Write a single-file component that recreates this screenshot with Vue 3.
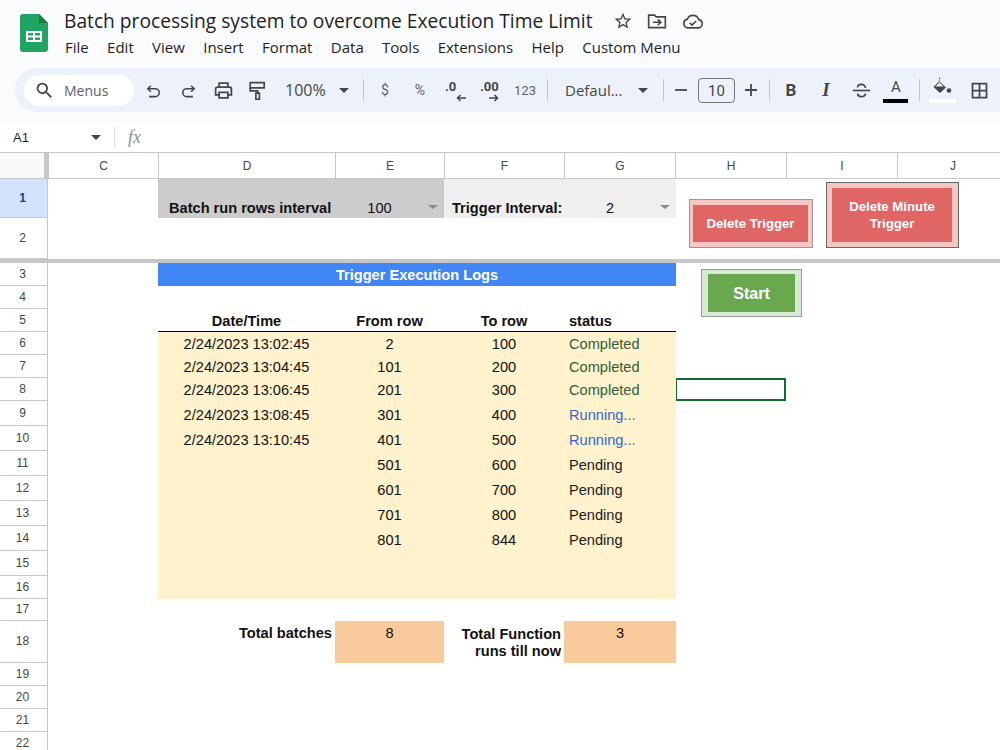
<template>
  <div class="app">
    <header class="topbar">
      <svg class="logo" viewBox="0 0 28 38">
        <path d="M3 0h16l9 9v26a3 3 0 0 1-3 3H3a3 3 0 0 1-3-3V3a3 3 0 0 1 3-3z" fill="#1fa463" />
        <path d="M19 0l9 9h-9z" fill="#188038" />
        <path d="M6 17h16v11H6z M8 19v2.500h5V19z M15 19v2.500h5V19z M8 23.500V26h5v-2.500z M15 23.500V26h5v-2.500z" fill="#fff" fill-rule="evenodd" />
      </svg>
      <div class="titles">
        <div class="title-row">
          <span class="doc-title">Batch processing system to overcome Execution Time Limit</span>
          <svg class="title-icon star" viewBox="0 0 24 24"><path d="M22 9.240l-7.190-.62L12 2 9.190 8.630 2 9.240l5.460 4.730L5.820 21 12 17.270 18.180 21l-1.630-7.030L22 9.240zM12 15.400l-3.760 2.270 1-4.280-3.320-2.880 4.380-.38L12 6.100l1.710 4.040 4.380.38-3.320 2.880 1 4.280L12 15.400z" fill="#444746" /></svg>
          <svg class="title-icon folder" viewBox="0 0 24 24" fill="none" stroke="#444746" stroke-width="2"><path d="M2 5h7l2 2h11v13H2z" /><path d="M7 13.500h9M13 10l3.500 3.500L13 17" /></svg>
          <svg class="title-icon cloud" viewBox="0 0 24 24" fill="none" stroke="#444746" stroke-width="1.800"><path d="M6.500 19.500a4.800 4.800 0 0 1-.6-9.500 6.500 6.500 0 0 1 12.300.5 4.600 4.600 0 0 1 .3 9z" /><path d="M8.500 14l2.500 2.500 4.500-4.500" /></svg>
        </div>
        <nav class="menu">
          <span v-for="item in menus" :key="item">{{ item }}</span>
        </nav>
      </div>
    </header>

    <div class="toolbar">
      <div class="search">
        <svg class="icon" viewBox="0 0 24 24"><path d="M15.500 14h-.79l-.28-.27A6.470 6.470 0 0 0 16 9.500 6.500 6.500 0 1 0 9.500 16c1.610 0 3.090-.59 4.230-1.570l.27.28v.79l5 4.990L20.490 19l-4.990-5zm-6 0C7.010 14 5 11.990 5 9.500S7.010 5 9.500 5 14 7.010 14 9.500 11.990 14 9.500 14z" fill="#444746" /></svg>
        <span>Menus</span>
      </div>

      <div class="group first">
        <span class="tool"><svg class="icon" viewBox="0 0 24 24" fill="none" stroke="#444746" stroke-width="1.800"><path d="M9 6.500L5.500 10 9 13.500" /><path d="M5.500 10H14a4.500 4.500 0 0 1 0 9H7" /></svg></span>
        <span class="tool"><svg class="icon" viewBox="0 0 24 24" fill="none" stroke="#444746" stroke-width="1.800"><path d="M15 6.500l3.500 3.500-3.500 3.500" /><path d="M18.500 10H10a4.500 4.500 0 0 0 0 9h7" /></svg></span>
        <span class="tool"><svg class="icon" viewBox="0 0 24 24" fill="none" stroke="#444746" stroke-width="2"><path d="M7 8V3.500h10V8" /><path d="M7 17H3V10a2 2 0 0 1 2-2h14a2 2 0 0 1 2 2v7h-4" /><path d="M7 14h10v6.500H7z" /></svg></span>
        <span class="tool"><svg class="icon" viewBox="0 0 24 24" fill="none" stroke="#444746" stroke-width="1.900"><path d="M2.500 3h16v6h-16z" /><path d="M2.500 9v3.500H11V15" /><path d="M9 15h4v7H9z" /></svg></span>
      </div>

      <div class="select zoom-select">
        <span>100%</span>
        <i class="caret"></i>
      </div>
      <i class="divider zoom-divider"></i>

      <div class="group narrow">
        <span class="tool small-text">$</span>
        <span class="tool small-text">%</span>
        <span class="tool decimal">
          <b>.0</b>
          <svg class="arrow left" viewBox="0 0 10 8" fill="none" stroke="#444746" stroke-width="1.500"><path d="M10 4H1.500M4.500 1L1.500 4l3 3" /></svg>
        </span>
        <span class="tool decimal">
          <b>.00</b>
          <svg class="arrow right" viewBox="0 0 10 8" fill="none" stroke="#444746" stroke-width="1.500"><path d="M0 4h8.500M5.500 1l3 3-3 3" /></svg>
        </span>
        <span class="tool number">123</span>
      </div>
      <i class="divider after-number"></i>

      <div class="select font-select">
        <span>Defaul...</span>
        <i class="caret"></i>
      </div>
      <i class="divider font-divider"></i>

      <div class="size">
        <svg class="step" viewBox="0 0 24 24" fill="none" stroke="#444746" stroke-width="1.800"><path d="M6 12h12" /></svg>
        <span class="size-box">10</span>
        <svg class="step" viewBox="0 0 24 24" fill="none" stroke="#444746" stroke-width="1.800"><path d="M6 12h12M12 6v12" /></svg>
      </div>
      <i class="divider size-divider"></i>

      <div class="group narrow">
        <span class="tool bold">B</span>
        <span class="tool italic">I</span>
        <span class="tool"><svg class="icon" viewBox="0 0 24 24" fill="none" stroke="#444746" stroke-width="1.900"><path d="M2 12h20" /><path d="M16.500 9c0-2.500-2-4-4.500-4S7.500 6.500 7.500 8.500" /><path d="M7.500 15.500c.3 2.500 2 3.500 4.500 3.500s4.300-1 4.500-3.500" /></svg></span>
        <span class="tool color-tool">A<i class="swatch black"></i></span>
      </div>
      <i class="divider color-divider"></i>

      <span class="tool fill-tool">
        <svg class="fill-icon" viewBox="0 0 24 20"><path d="M9 1l1.500 1.500L8.500 4.500l7.500 7-6 5.500-6.500-6 6-6z M9.500 6.200l-4 4.300h8z" fill="#444746" fill-rule="evenodd" /><circle cx="19" cy="14.500" r="2.300" fill="#444746" /></svg>
        <i class="swatch white"></i>
      </span>
      <span class="tool borders"><svg class="icon" viewBox="0 0 24 24" fill="none" stroke="#444746" stroke-width="2"><path d="M4 4h16v16H4zM12 4v16M4 12h16" /></svg></span>
    </div>

    <div class="formula-bar">
      <span class="name-box">A1</span>
      <i class="caret"></i>
      <i class="formula-divider"></i>
      <span class="fx">fx</span>
    </div>

    <div class="sheet">
      <div class="corner"></div>
      <div v-for="col in columns" :key="col" class="col-head">{{ col }}</div>
      <div
        v-for="row in rows"
        :key="row"
        class="row-head"
        :class="{ active: row === 1 }"
        :style="{ gridRow: gridRowOf(row) }"
      >{{ row }}</div>
      <div class="freeze-line"></div>

      <div
        v-for="cell in cells"
        :key="cell.key"
        class="cell"
        :class="cell.cls"
        :style="{ gridRow: cell.gridRow, gridColumn: cell.gridColumn }"
      >
        <span class="cell-text">{{ cell.text }}</span>
        <i v-if="cell.dropdown" class="cell-caret"></i>
      </div>

      <div class="selection"></div>

      <button class="sheet-button red delete-trigger"><span>Delete Trigger</span></button>
      <button class="sheet-button red delete-minute"><span>Delete Minute<br />Trigger</span></button>
      <button class="sheet-button green start"><span>Start</span></button>
    </div>
  </div>
</template>

<script setup>
const menus = ['File', 'Edit', 'View', 'Insert', 'Format', 'Data', 'Tools', 'Extensions', 'Help', 'Custom Menu']
const columns = ['C', 'D', 'E', 'F', 'G', 'H', 'I', 'J']
const rows = Array.from({ length: 22 }, (_, i) => i + 1)

// row 2 and 3 have the freeze line between them
const gridRowOf = (row) => (row <= 2 ? row + 1 : row + 2)
const colIndex = { D: 3, E: 4, F: 5, G: 6 }

const logs = [
  ['2/24/2023 13:02:45', '2', '100', 'Completed'],
  ['2/24/2023 13:04:45', '101', '200', 'Completed'],
  ['2/24/2023 13:06:45', '201', '300', 'Completed'],
  ['2/24/2023 13:08:45', '301', '400', 'Running...'],
  ['2/24/2023 13:10:45', '401', '500', 'Running...'],
  ['', '501', '600', 'Pending'],
  ['', '601', '700', 'Pending'],
  ['', '701', '800', 'Pending'],
  ['', '801', '844', 'Pending'],
  ['', '', '', ''],
  ['', '', '', '']
]

const cell = (col, row, text, cls, extra = {}) => ({
  key: col + row,
  text,
  cls,
  gridRow: gridRowOf(row),
  gridColumn: colIndex[col],
  ...extra
})

const statusClass = { Completed: 'done', 'Running...': 'running', Pending: 'pending' }

// rows from 9 on are taller and sit a pixel lower
const tallRow = (i) => (i >= 3 ? 'tall' : '')

const cells = [
  cell('D', 1, 'Batch run rows interval', 'dark label'),
  cell('E', 1, '100', 'dark value', { dropdown: true }),
  cell('F', 1, 'Trigger Interval:', 'light label'),
  cell('G', 1, '2', 'light value edge', { dropdown: true }),
  cell('D', 3, 'Trigger Execution Logs', 'banner edge', { gridColumn: '3 / 7' }),
  cell('D', 5, 'Date/Time', 'head center'),
  cell('E', 5, 'From row', 'head center'),
  cell('F', 5, 'To row', 'head center'),
  cell('G', 5, 'status', 'head left edge'),
  ...logs.flatMap((log, i) => [
    cell('D', i + 6, log[0], ['log center', tallRow(i)]),
    cell('E', i + 6, log[1], ['log center', tallRow(i)]),
    cell('F', i + 6, log[2], ['log center', tallRow(i)]),
    cell('G', i + 6, log[3], ['log left edge', tallRow(i), statusClass[log[3]]])
  ]),
  cell('D', 18, 'Total batches', 'total-label'),
  cell('E', 18, '8', 'total-value'),
  cell('F', 18, 'Total Function runs till now', 'total-label wrapped'),
  cell('G', 18, '3', 'total-value edge')
]
</script>

<style scoped>
.app {
  width: 1000px;
  height: 750px;
  overflow: hidden;
  background: #f9fbfd;
  font-family: Roboto, "Liberation Sans", sans-serif;
  color: #1f1f1f;
}

.topbar {
  display: flex;
  height: 68px;
  padding-left: 20px;
}

.logo {
  width: 28px;
  height: 38px;
  margin-top: 14px;
  flex-shrink: 0;
}

.titles {
  margin-left: 16px;
  padding-top: 8px;
}

.title-row {
  display: flex;
  align-items: center;
  height: 25px;
}

.doc-title {
  font-family: "Open Sans", sans-serif;
  font-size: 19.200px;
  white-space: nowrap;
  margin-right: 20px;
}

.title-icon {
  width: 20px;
  height: 20px;
  margin-right: 15px;
  flex-shrink: 0;
}

.star {
  margin-right: 14px;
}

.cloud {
  width: 22px;
  height: 22px;
}

.menu {
  display: flex;
  gap: 18.350px;
  margin-top: 4px;
  margin-left: 1px;
  font-family: "Open Sans", sans-serif;
  font-size: 15px;
  line-height: 20px;
  white-space: nowrap;
}

.toolbar {
  display: flex;
  align-items: center;
  height: 44px;
  margin-left: 15px;
  padding-left: 9px;
  background: #edf2fa;
  border-radius: 22px 0 0 22px;
  color: #444746;
  font-size: 14px;
}

.search {
  display: flex;
  align-items: center;
  gap: 9px;
  width: 110px;
  height: 31px;
  padding-left: 10px;
  box-sizing: border-box;
  background: #fff;
  border-radius: 16px;
  font-family: "Open Sans", sans-serif;
  color: #5f6368;
  flex-shrink: 0;
}

.icon {
  width: 21px;
  height: 21px;
  flex-shrink: 0;
}

.group {
  display: flex;
  gap: 7px;
  flex-shrink: 0;
}

.group.first {
  margin-left: 5px;
}

.group.narrow {
  margin-left: 7px;
}

.tool {
  position: relative;
  display: flex;
  align-items: center;
  justify-content: center;
  width: 28px;
  height: 28px;
  flex-shrink: 0;
}

.small-text {
  font-size: 14px;
  color: #5f6368;
}

.number {
  font-size: 13px;
  color: #5f6368;
}

.decimal b {
  position: absolute;
  top: 3px;
  left: 4px;
  font-size: 13px;
  font-weight: 700;
}

.arrow {
  position: absolute;
  width: 10px;
  height: 8px;
  top: 18px;
}

.arrow.left {
  left: 10px;
}

.arrow.right {
  left: 13px;
}

.select {
  display: flex;
  align-items: center;
  justify-content: space-between;
  flex-shrink: 0;
}

.zoom-select {
  width: 64px;
  margin-left: 13px;
  font-family: "Open Sans", sans-serif;
  font-size: 16px;
}

.font-select {
  width: 83px;
  margin-left: 17px;
  font-family: "Open Sans", sans-serif;
  font-size: 15px;
}

.caret {
  display: block;
  width: 0;
  height: 0;
  border-left: 5px solid transparent;
  border-right: 5px solid transparent;
  border-top: 5px solid #444746;
  flex-shrink: 0;
}

.divider {
  display: block;
  width: 1px;
  height: 22px;
  background: #c7c7c7;
  flex-shrink: 0;
}

.zoom-divider {
  margin-left: 14px;
}

.after-number {
  margin-left: 8px;
}

.font-divider {
  margin-left: 15px;
}

.size-divider {
  margin-left: 6px;
}

.color-divider {
  margin-left: 9px;
}

.size {
  display: flex;
  align-items: center;
  margin-left: 5px;
  flex-shrink: 0;
}

.step {
  width: 24px;
  height: 24px;
}

.size-box {
  width: 37px;
  height: 25px;
  margin: 0 4px 0 5px;
  box-sizing: border-box;
  border: 1px solid #747775;
  border-radius: 4px;
  text-align: center;
  font-size: 15px;
  line-height: 25px;
}

.bold {
  font-size: 17px;
  font-weight: 700;
}

.italic {
  font-family: "Liberation Serif", serif;
  font-size: 19px;
  font-weight: 700;
  font-style: italic;
}

.color-tool {
  font-size: 15px;
  padding-bottom: 7px;
  box-sizing: border-box;
}

.swatch {
  position: absolute;
  display: block;
  height: 4px;
  bottom: 1px;
}

.swatch.black {
  left: 1px;
  width: 25px;
  background: #000;
}

.swatch.white {
  left: 1px;
  width: 27px;
  background: #fff;
}

.fill-tool {
  margin-left: 8px;
}

.fill-icon {
  width: 24px;
  height: 20px;
  margin-bottom: 9px;
}

.borders {
  margin-left: 9px;
}

.formula-bar {
  display: flex;
  align-items: center;
  height: 30px;
  margin-top: 10px;
  padding-left: 13px;
  background: #fff;
  color: #444746;
}

.name-box {
  width: 78px;
  font-family: "Liberation Sans", sans-serif;
  font-size: 13px;
  color: #1f1f1f;
}

.formula-divider {
  display: block;
  width: 1px;
  height: 20px;
  margin-left: 13px;
  background: #dadce0;
}

.fx {
  margin-left: 13px;
  font-family: "Liberation Serif", serif;
  font-size: 18px;
  font-style: italic;
  color: #8e9194;
}

.sheet {
  position: relative;
  display: grid;
  grid-template-columns: 48px 110px 177px 109px 120px 111px 111px 111px 111px;
  grid-template-rows: 27px 39px 41px 4px repeat(6, 23px) repeat(7, 25px) 23px 22px 42px repeat(4, 23px);
  width: 1008px;
  background: #fff;
  font-family: "Liberation Sans", sans-serif;
  font-size: 14.600px;
  color: #111;
}

.corner {
  grid-row: 1;
  grid-column: 1;
  background: #f8f9fa;
  border-top: 1px solid #c7c7c7;
  border-right: 4px solid #c7c7c7;
  border-bottom: 1px solid #c7c7c7;
  box-sizing: border-box;
}

.col-head {
  display: flex;
  align-items: center;
  justify-content: center;
  grid-row: 1;
  border-top: 1px solid #c7c7c7;
  border-left: 1px solid #c7c7c7;
  border-bottom: 1px solid #c7c7c7;
  font-size: 12px;
  color: #444746;
}

.row-head {
  grid-column: 1;
  display: flex;
  align-items: center;
  justify-content: center;
  padding: 0 2px 1px 0;
  border-right: 1px solid #c7c7c7;
  border-bottom: 1px solid #c7c7c7;
  box-sizing: border-box;
  font-size: 12px;
  color: #444746;
}

.row-head.active {
  background: #d3e3fd;
  font-weight: 700;
  color: #0842a0;
}

.freeze-line {
  grid-row: 4;
  grid-column: 1 / -1;
  background: #c7c7c7;
}

.cell {
  display: flex;
  align-items: center;
  min-width: 0;
  position: relative;
  white-space: nowrap;
}

.edge {
  margin-right: -1px;
}

.dark {
  background: #ccc;
}

.light {
  background: #efefef;
}

.label {
  align-items: flex-end;
  font-weight: 700;
  padding: 0 0 2px 11px;
}

.light.label {
  padding-left: 8px;
}

.value {
  align-items: flex-end;
  justify-content: center;
  padding: 0 20px 2px 0;
}

.cell-caret {
  position: absolute;
  right: 6px;
  bottom: 9px;
  width: 0;
  height: 0;
  border-left: 5px solid transparent;
  border-right: 5px solid transparent;
  border-top: 4px solid #8a8a8a;
}

.banner {
  justify-content: center;
  background: #4285f4;
  color: #fff;
  font-weight: 700;
}

.head {
  align-items: flex-end;
  padding-bottom: 2px;
  font-weight: 700;
  border-bottom: 1px solid #000;
}

.center {
  justify-content: center;
}

.left {
  padding-left: 5px;
}

.log {
  background: #fff2cc;
}

.tall {
  padding-top: 2px;
}

.done {
  color: #2f5e3c;
}

.running {
  color: #3367d6;
}

.pending {
  color: #1a1a1a;
}

.total-label {
  align-items: flex-start;
  justify-content: flex-end;
  padding: 4px 3px 0 0;
  font-weight: 700;
  line-height: 17px;
  text-align: right;
  white-space: normal;
}

.total-label.wrapped {
  padding-top: 5px;
}

.total-value {
  align-items: flex-start;
  justify-content: center;
  padding-top: 4px;
  background: #f9cb9c;
}

.selection {
  grid-row: 10;
  grid-column: 7;
  border: 2px solid #146c2e;
}

.sheet-button {
  position: absolute;
  display: flex;
  padding: 0;
  box-sizing: border-box;
  font-family: "Liberation Sans", sans-serif;
  font-weight: 700;
  color: #fff;
  cursor: pointer;
}

.sheet-button span {
  display: flex;
  flex: 1;
  align-items: center;
  justify-content: center;
  line-height: 17px;
}

.red {
  background: #f4c7c3;
  font-size: 13.200px;
}

.red span {
  background: #e06666;
}

.green {
  background: #d9ead3;
  font-size: 16px;
}

.green span {
  background: #6aa84f;
}

.delete-trigger {
  left: 689px;
  top: 47px;
  width: 124px;
  height: 49px;
  padding: 5px 4px 5px 3px;
  border: 1px solid #999;
}

.delete-minute {
  left: 826px;
  top: 30px;
  width: 133px;
  height: 66px;
  padding: 5px 6px 5px 5px;
  border: 1px solid #666;
}

.start {
  left: 701px;
  top: 117px;
  width: 101px;
  height: 48px;
  padding: 4px 6px 4px 6px;
  border: 1px solid #999;
}
</style>

<style>
body {
  margin: 0;
  overflow: hidden;
}
</style>
